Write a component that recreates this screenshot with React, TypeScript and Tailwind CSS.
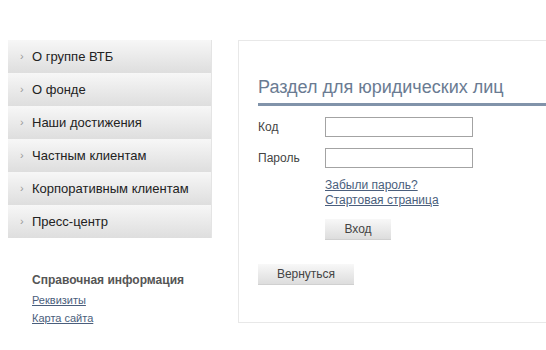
import React from 'react';

const menuItems = [
  'О группе ВТБ',
  'О фонде',
  'Наши достижения',
  'Частным клиентам',
  'Корпоративным клиентам',
  'Пресс-центр',
];

export default function App() {
  return (
    <div
      className="w-[546px] h-[350px] overflow-hidden bg-white flex pt-[40px]"
      style={{ fontFamily: '"Liberation Sans", Arial, sans-serif' }}
    >
      {/* Left column */}
      <div className="w-[204px] ml-[8px] shrink-0 flex flex-col">
        <div className="flex flex-col border-r border-[#e4e4e4]">
          {menuItems.map((item) => (
            <div
              key={item}
              className="h-[33px] flex items-center bg-gradient-to-b from-[#f7f7f7] to-[#dedede] text-[13px] text-[#222]"
            >
              <span className="w-[24px] pl-[12px] text-[11px] text-[#999]">›</span>
              <span>{item}</span>
            </div>
          ))}
        </div>

        <div className="pl-[24px] mt-[34px] flex flex-col">
          <div className="text-[12px] font-bold text-[#555] leading-[16px]">Справочная информация</div>
          <a href="#" className="mt-[4px] text-[11px] leading-[16px] text-[#4a5e7c] underline">Реквизиты</a>
          <a href="#" className="mt-[2px] text-[11px] leading-[16px] text-[#4a5e7c] underline">Карта сайта</a>
        </div>
      </div>

      {/* Right panel */}
      <div className="ml-[26px] w-[330px] shrink-0 h-[283px] border border-[#e8e8e8] border-r-0 pl-[19px] pt-[34px]">
        <div className="text-[18px] leading-[24px] text-[#6a7b92]">Раздел для юридических лиц</div>
        <div className="mt-[4px] h-[3px] bg-[#8193aa]" />

        <div className="mt-[11px] flex flex-col gap-[11px]">
          <div className="flex items-center">
            <span className="w-[67px] text-[12px] text-[#444]">Код</span>
            <div className="w-[148px] h-[20px] border border-[#a3a3a3] bg-white" />
          </div>
          <div className="flex items-center">
            <span className="w-[67px] text-[12px] text-[#444]">Пароль</span>
            <div className="w-[148px] h-[20px] border border-[#a3a3a3] bg-white" />
          </div>
        </div>

        <div className="ml-[67px] mt-[10px] flex flex-col text-[12px] leading-[15px]">
          <a href="#" className="text-[#4a5e7c] underline">Забыли пароль?</a>
          <a href="#" className="text-[#4a5e7c] underline">Стартовая страница</a>
        </div>

        <div className="ml-[67px] mt-[11px] w-[66px] h-[21px] bg-gradient-to-b from-[#f8f8f8] to-[#dddddd] border-b border-[#d0d0d0] flex items-center justify-center text-[12px] text-[#444]">
          Вход
        </div>

        <div className="mt-[24px] w-[96px] h-[21px] bg-gradient-to-b from-[#f8f8f8] to-[#dddddd] border-b border-[#d0d0d0] flex items-center justify-center text-[12px] text-[#444]">
          Вернуться
        </div>
      </div>
    </div>
  );
}
